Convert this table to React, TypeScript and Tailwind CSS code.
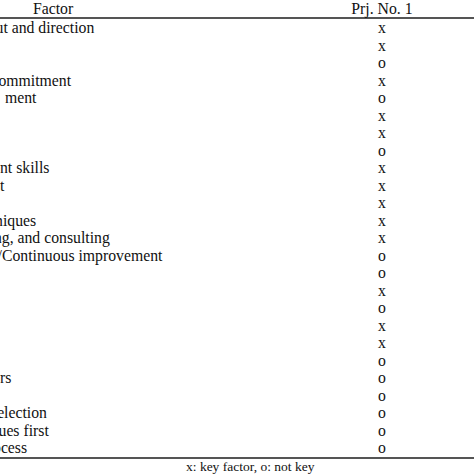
const rows: { text: string; shift: string; mark: 'x' | 'o' }[] = [
  { text: 'ut and direction', shift: 'ml-[-4.5px]', mark: 'x' },
  { text: '', shift: '', mark: 'x' },
  { text: '', shift: '', mark: 'o' },
  { text: 'commitment', shift: 'ml-[-8.5px]', mark: 'x' },
  { text: 'ment', shift: 'ml-[5px]', mark: 'o' },
  { text: '', shift: '', mark: 'x' },
  { text: '', shift: '', mark: 'x' },
  { text: '', shift: '', mark: 'o' },
  { text: 'ent skills', shift: 'ml-[-7px]', mark: 'x' },
  { text: 'nt', shift: 'ml-[-8px]', mark: 'x' },
  { text: '', shift: '', mark: 'x' },
  { text: 'niques', shift: 'ml-[-5px]', mark: 'x' },
  { text: 'ing, and consulting', shift: 'ml-[-10.5px]', mark: 'x' },
  { text: '/Continuous improvement', shift: 'ml-[-2.5px]', mark: 'o' },
  { text: '', shift: '', mark: 'o' },
  { text: '', shift: '', mark: 'x' },
  { text: '', shift: '', mark: 'o' },
  { text: '', shift: '', mark: 'x' },
  { text: '', shift: '', mark: 'x' },
  { text: '', shift: '', mark: 'o' },
  { text: 'ers', shift: 'ml-[-7px]', mark: 'o' },
  { text: '', shift: '', mark: 'o' },
  { text: 'selection', shift: 'ml-[-9px]', mark: 'o' },
  { text: 'ues first', shift: 'ml-[-1.5px]', mark: 'o' },
  { text: 'ocess', shift: 'ml-[-7px]', mark: 'o' },
];

const App = () => {
  return (
    <div className="w-[474px] h-[474px] overflow-hidden bg-white text-[#111] font-['Liberation_Serif',serif] text-[15.75px]">
      <div className="grid grid-cols-[290px_184px] h-[19px] border-b-2 border-[#555] leading-[17px]">
        <div className="pl-[33px]">Factor</div>
        <div className="text-center">Prj. No. 1</div>
      </div>

      {rows.map((row, i) => (
        <div key={i} className="grid grid-cols-[290px_184px] h-[17.5px] leading-[17.5px]">
          <div className="whitespace-nowrap">
            <span className={`block ${row.shift}`}>{row.text}</span>
          </div>
          <div className="text-center">{row.mark}</div>
        </div>
      ))}

      <div className="border-t-2 border-[#555] pl-[186px] text-[13.5px] leading-[15px] whitespace-nowrap">
        x: key factor, o: not key
      </div>
    </div>
  );
};

export default App;
